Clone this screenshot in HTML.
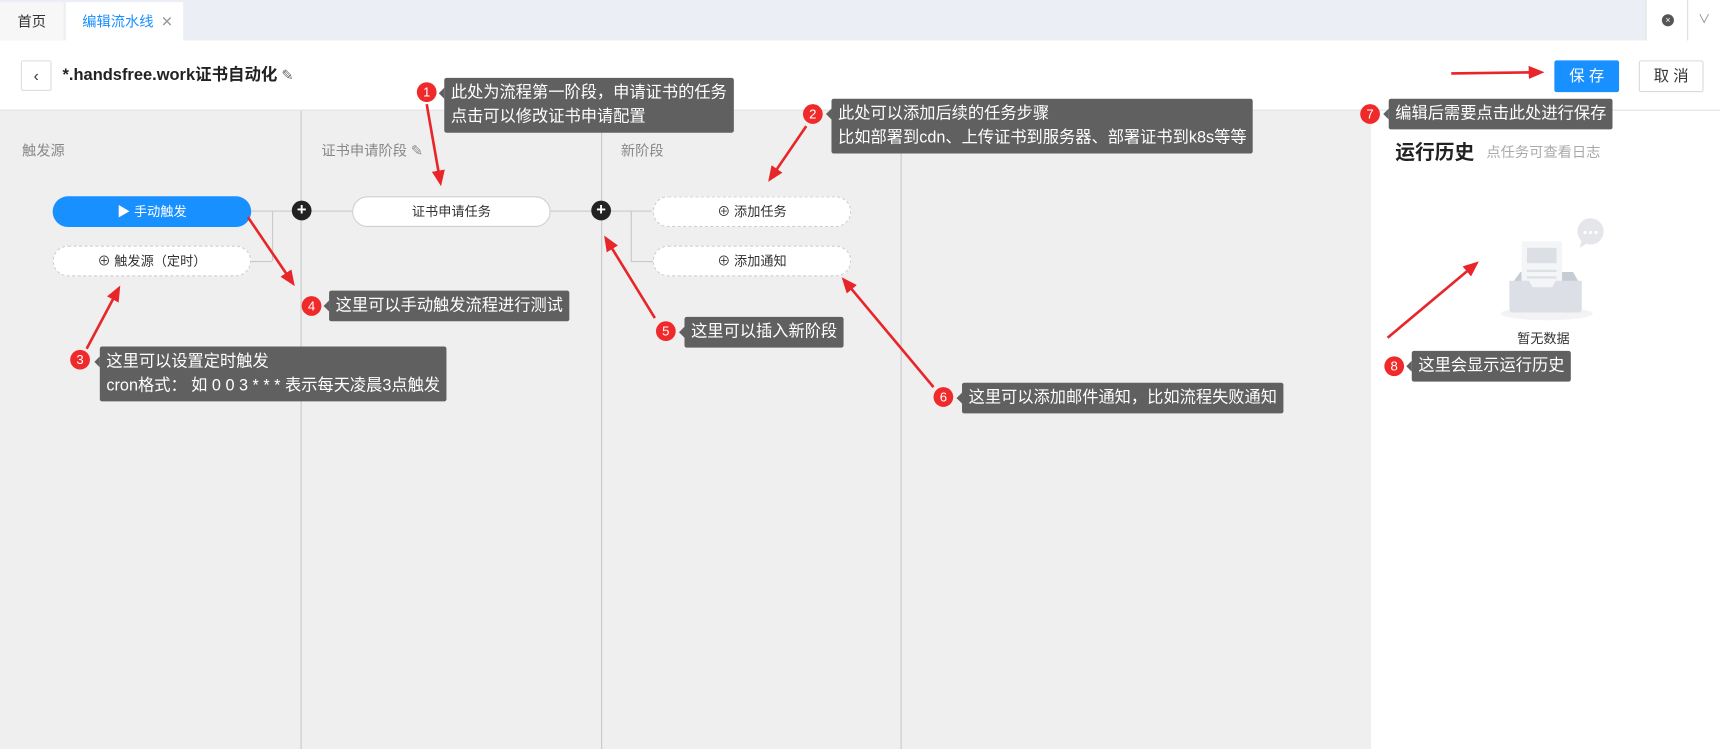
<!DOCTYPE html>
<html><head><meta charset="utf-8"><style>
*{margin:0;padding:0;box-sizing:border-box}
html,body{width:1720px;height:749px;overflow:hidden;background:#fff}
body{font-family:"Liberation Sans","Noto Sans CJK SC",sans-serif}
#w{position:absolute;left:0;top:0;width:1568px;height:683px;transform:scale(1.09694,1.0966);transform-origin:0 0}
.a{position:absolute}
.tabbar{left:0;top:0;width:1568px;height:37px;background:#ebeff5}
.pill{position:absolute;height:28px;border-radius:14px;font-size:12px;line-height:26px;text-align:center;color:#333;background:#fff}
.dash{border:1px dashed #d0d0d0}
.solid{border:1px solid #d0d0d0}
.note{position:absolute;background:#606060;color:#fff;font-size:14.8px;line-height:22px;padding:3px 6px;border-radius:2px;white-space:nowrap}
.note:before{content:"";position:absolute;left:-5px;top:9px;border:5px solid transparent;border-left:0;border-right-color:#606060}
.num{position:absolute;width:18px;height:18px;border-radius:50%;background:#f02a2a;color:#fff;font-size:12px;line-height:18px;text-align:center}
.plus{position:absolute;width:18px;height:18px;border-radius:50%;background:#222;color:#fff;font-size:15px;line-height:17px;text-align:center;font-weight:bold}
.vl{position:absolute;width:1px;background:#c8c8c8}
.hl{position:absolute;height:1px;background:#c8c8c8}
.ct{position:absolute;top:127px;font-size:13px;color:#888}
</style></head><body><div id="w">
<div class="a tabbar"></div>
<div class="a" style="left:0;top:2px;width:58px;height:35px;background:#f7f7f7;font-size:13px;line-height:35px;text-align:center;color:#333">首页</div>
<div class="a" style="left:60px;top:2px;width:107px;height:35px;background:#fff;font-size:13px;line-height:35px;color:#1890ff;padding-left:15px">编辑流水线 <span style="color:#999;margin-left:3px">✕</span></div>
<div class="a" style="left:1500px;top:0;width:38px;height:37px;background:#fff;border-left:1px solid #ddd"><div style="position:absolute;left:14px;top:13px;width:11px;height:11px;border-radius:50%;background:#555;color:#fff;font-size:8px;line-height:11px;text-align:center">×</div></div>
<div class="a" style="left:1538px;top:0;width:30px;height:37px;background:#fff;border-left:1px solid #ddd;color:#888;font-size:11px;text-align:center;line-height:37px">∨</div>
<div class="a" style="left:0;top:37px;width:1568px;height:64px;background:#fff;border-bottom:1px solid #ddd"></div>
<div class="a" style="left:19px;top:55px;width:28px;height:28px;border:1px solid #ddd;border-radius:2px;text-align:center;line-height:26px;font-size:14px;color:#333">‹</div>
<div class="a" style="left:57px;top:59px;font-size:15px;font-weight:bold;color:#222;line-height:20px">*.handsfree.work证书自动化<span style="font-weight:normal;color:#666;font-size:13px"> ✎</span></div>
<div class="a" style="left:1417px;top:55px;width:59px;height:29px;background:#1890ff;color:#fff;font-size:14px;line-height:29px;text-align:center;border-radius:2px">保 存</div>
<div class="a" style="left:1494px;top:55px;width:59px;height:29px;border:1px solid #d9d9d9;color:#333;font-size:14px;line-height:27px;text-align:center;border-radius:2px">取 消</div>
<div class="a" style="left:0;top:101px;width:1250px;height:582px;background:#efefef"></div>
<div class="vl" style="left:274px;top:101px;height:582px"></div>
<div class="vl" style="left:548px;top:101px;height:582px"></div>
<div class="vl" style="left:821px;top:101px;height:582px"></div>
<div class="ct" style="left:20px">触发源</div>
<div class="ct" style="left:293px">证书申请阶段 ✎</div>
<div class="ct" style="left:566px">新阶段</div>
<div class="hl" style="left:229px;top:192px;width:46px"></div>
<div class="vl" style="left:248px;top:192px;height:46px"></div>
<div class="hl" style="left:229px;top:238px;width:19px"></div>
<div class="hl" style="left:502px;top:192px;width:92px"></div>
<div class="hl" style="left:275px;top:192px;width:46px"></div>
<div class="vl" style="left:575px;top:192px;height:46px"></div>
<div class="hl" style="left:575px;top:238px;width:20px"></div>
<div class="pill" style="left:48px;top:179px;width:181px;background:#1890ff;color:#fff;line-height:28px">▶ 手动触发</div>
<div class="pill dash" style="left:48px;top:224px;width:181px">⊕ 触发源（定时）</div>
<div class="plus" style="left:266px;top:183px">+</div>
<div class="pill solid" style="left:321px;top:179px;width:181px">证书申请任务</div>
<div class="plus" style="left:539px;top:183px">+</div>
<div class="pill dash" style="left:595px;top:179px;width:181px">⊕ 添加任务</div>
<div class="pill dash" style="left:595px;top:224px;width:181px">⊕ 添加通知</div>
<div class="a" style="left:1250px;top:101px;width:318px;height:582px;background:#fff"></div>
<div class="a" style="left:1272px;top:125px;font-size:18px;font-weight:bold;color:#222">运行历史</div>
<div class="a" style="left:1355px;top:128px;font-size:13px;color:#aaa">点任务可查看日志</div>
<svg class="a" style="left:1360px;top:190px" width="120" height="105" viewBox="1360 190 120 105">
<ellipse cx="1410" cy="286" rx="42" ry="6" fill="#f3f3f5"/>
<circle cx="1450" cy="211" r="12" fill="#e4e6ea"/><path d="M1442 219 l-2 7 l8 -5z" fill="#e4e6ea"/>
<circle cx="1445" cy="212" r="1.5" fill="#fff"/><circle cx="1450" cy="212" r="1.5" fill="#fff"/><circle cx="1455" cy="212" r="1.5" fill="#fff"/>
<path d="M1376 262 l10 -14 h48 l8 14z" fill="#c6ccd4"/>
<rect x="1387" y="220" width="37" height="46" rx="2" fill="#f4f5f7"/>
<rect x="1392" y="226" width="27" height="14" fill="#dcdfe4"/>
<rect x="1392" y="246" width="27" height="2" fill="#dcdfe4"/><rect x="1392" y="252" width="27" height="2" fill="#dcdfe4"/>
<path d="M1376 256 h18 l3 6 h18 l3 -6 h24 v26 a3 3 0 0 1 -3 3 h-60 a3 3 0 0 1 -3 -3z" fill="#dcdfe5"/>
</svg>
<div class="a" style="left:1383px;top:300px;font-size:12px;color:#333">暂无数据</div>

<div class="num" style="left:380px;top:75px">1</div><div class="note" style="left:405px;top:71px">此处为流程第一阶段，申请证书的任务<br>点击可以修改证书申请配置</div>
<div class="num" style="left:732px;top:95px">2</div><div class="note" style="left:758px;top:90px">此处可以添加后续的任务步骤<br>比如部署到cdn、上传证书到服务器、部署证书到k8s等等</div>
<div class="num" style="left:1240px;top:95px">7</div><div class="note" style="left:1266px;top:90px">编辑后需要点击此处进行保存</div>
<div class="num" style="left:275px;top:270px">4</div><div class="note" style="left:300px;top:265px">这里可以手动触发流程进行测试</div>
<div class="num" style="left:598px;top:293px">5</div><div class="note" style="left:624px;top:289px">这里可以插入新阶段</div>
<div class="num" style="left:64px;top:319px">3</div><div class="note" style="left:91px;top:316px">这里可以设置定时触发<br>cron格式： 如 0 0 3 * * * 表示每天凌晨3点触发</div>
<div class="num" style="left:851px;top:353px">6</div><div class="note" style="left:877px;top:349px">这里可以添加邮件通知，比如流程失败通知</div>
<div class="num" style="left:1262px;top:325px">8</div><div class="note" style="left:1287px;top:320px">这里会显示运行历史</div>

<svg class="a" style="left:0;top:0" width="1568" height="683">
<defs><marker id="h" markerWidth="6" markerHeight="5" refX="1" refY="2.5" orient="auto" markerUnits="strokeWidth"><path d="M0 0 L6 2.5 L0 5z" fill="#e8262a"/></marker></defs>
<g stroke="#e8262a" stroke-width="2.4" marker-end="url(#h)" fill="none">
<line x1="389" y1="95" x2="400" y2="158"/>
<line x1="735" y1="115" x2="707" y2="156"/>
<line x1="1323" y1="67" x2="1396" y2="66"/>
<line x1="226" y1="198" x2="262" y2="251"/>
<line x1="79" y1="318" x2="104" y2="271"/>
<line x1="597" y1="290" x2="557" y2="225"/>
<line x1="851" y1="353" x2="775" y2="262"/>
<line x1="1265" y1="308" x2="1339" y2="246"/>
</g></svg>
</div></body></html>
